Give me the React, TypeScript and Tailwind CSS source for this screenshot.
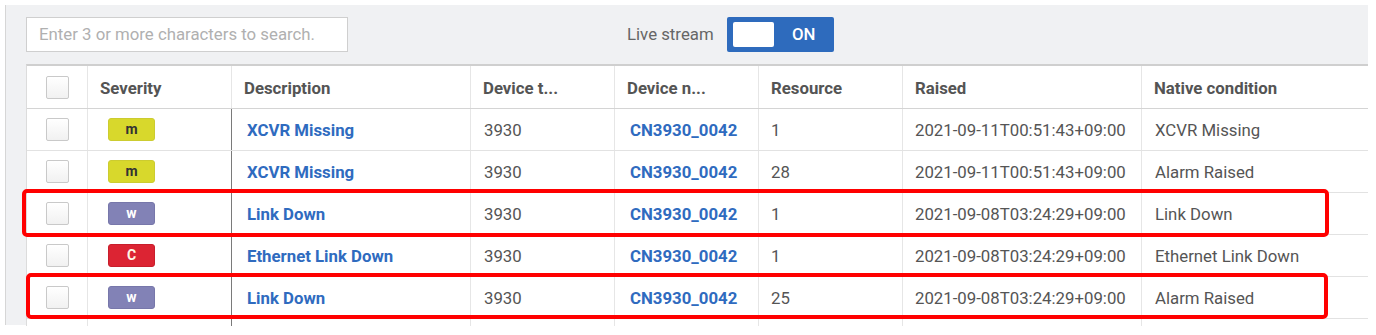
const cols = "grid grid-cols-[61px_144px_239px_144px_144px_144px_239px_1fr]"

type Sev = "m" | "w" | "C"

const rows: { sev: Sev; desc: string; res: string; raised: string; native: string }[] = [
  { sev: "m", desc: "XCVR Missing", res: "1", raised: "2021-09-11T00:51:43+09:00", native: "XCVR Missing" },
  { sev: "m", desc: "XCVR Missing", res: "28", raised: "2021-09-11T00:51:43+09:00", native: "Alarm Raised" },
  { sev: "w", desc: "Link Down", res: "1", raised: "2021-09-08T03:24:29+09:00", native: "Link Down" },
  { sev: "C", desc: "Ethernet Link Down", res: "1", raised: "2021-09-08T03:24:29+09:00", native: "Ethernet Link Down" },
  { sev: "w", desc: "Link Down", res: "25", raised: "2021-09-08T03:24:29+09:00", native: "Alarm Raised" },
]

const sevStyle: Record<Sev, string> = {
  m: "bg-[#d8d82c] text-[#333] border-[#cccc30]",
  w: "bg-[#8282b6] text-white border-[#7777aa]",
  C: "bg-[#dc2433] text-[#fff6e6] border-[#c81e2c]",
}

function Checkbox() {
  return (
    <div className="w-[23px] h-[23px] rounded-[2px] border border-[#c9c9c9] bg-gradient-to-b from-white to-[#f1f1f1]" />
  )
}

function Badge({ sev }: { sev: Sev }) {
  return (
    <div
      className={`w-[47px] h-[23px] rounded-[3px] border flex items-center justify-center text-[14px] font-bold ${sevStyle[sev]}`}
    >
      {sev}
    </div>
  )
}

const headers = ["Severity", "Description", "Device t...", "Device n...", "Resource", "Raised", "Native condition"]

export default function App() {
  return (
    <div className="relative w-[1376px] h-[335px] bg-white font-['Roboto',sans-serif] overflow-hidden">
      <div className="ml-[5px] mt-[5px] w-[1363px] h-[320px] border-l border-[#d6d6d6] bg-[#f0f1f3] pl-[20px] pt-[12px]">
        <div className="flex items-center h-[35px]">
          <div className="w-[322px] h-[35px] bg-white border border-[#cfcfcf] flex items-center px-[12px] pt-[1px] text-[16.8px] text-[#b0b0b0]">
            Enter 3 or more characters to search.
          </div>
          <span className="ml-[279px] pt-[1px] text-[16.8px] text-[#666]">Live stream</span>
          <div className="ml-[13px] w-[107px] h-[35px] rounded-[2px] bg-[#2e6bbd] flex items-center pl-[6px]">
            <div className="w-[41px] h-[25px] rounded-[2px] bg-white" />
            <span className="flex-1 text-center pt-[1px] text-white text-[16.8px] font-medium">ON</span>
          </div>
        </div>

        <div className="mt-[12px] bg-white border-t-2 border-l border-[#cfcfcf] border-l-[#dcdcdc]">
          <div className={`${cols} h-[43px] border-b border-[#d4d4d4]`}>
            <div className="flex items-center justify-center border-r border-[#e6e6e6]">
              <Checkbox />
            </div>
            {headers.map((h, i) => (
              <div
                key={h}
                className={`flex items-center px-[12px] pt-[3px] text-[16.8px] font-bold text-[#545454] ${i < headers.length - 1 ? "border-r border-[#e6e6e6]" : ""}`}
              >
                {h}
              </div>
            ))}
          </div>
          {rows.map((r, i) => (
            <div key={i} className={`${cols} h-[42px] border-b border-[#e2e2e2] text-[16.8px] text-[#555]`}>
              <div className="flex items-center justify-center border-r border-[#e6e6e6]">
                <Checkbox />
              </div>
              <div className="flex items-center pl-[20px] border-r border-[#7a7a7a]">
                <Badge sev={r.sev} />
              </div>
              <div className="flex items-center pl-[15px] pt-[2px] border-r border-[#e6e6e6] font-bold text-[#2f6bbf]">
                {r.desc}
              </div>
              <div className="flex items-center pl-[13px] pt-[2px] border-r border-[#e6e6e6]">3930</div>
              <div className="flex items-center pl-[15px] pt-[2px] border-r border-[#e6e6e6] font-bold text-[#2f6bbf]">
                CN3930_0042
              </div>
              <div className="flex items-center pl-[12px] pt-[2px] border-r border-[#e6e6e6]">{r.res}</div>
              <div className="flex items-center pl-[12px] pt-[2px] border-r border-[#e6e6e6]">{r.raised}</div>
              <div className="flex items-center pl-[13px] pt-[2px]">{r.native}</div>
            </div>
          ))}
          <div className={`${cols} h-[7px]`}>
            <div className="border-r border-[#e6e6e6]" />
            <div className="border-r border-[#7a7a7a]" />
            <div className="border-r border-[#e6e6e6]" />
            <div className="border-r border-[#e6e6e6]" />
            <div className="border-r border-[#e6e6e6]" />
            <div className="border-r border-[#e6e6e6]" />
            <div className="border-r border-[#e6e6e6]" />
            <div />
          </div>
        </div>
      </div>

      <div className="absolute left-[22px] top-[189px] w-[1307px] h-[48px] border-[4px] border-[#ff0000] rounded-[5px]" />
      <div className="absolute left-[26px] top-[273px] w-[1302px] h-[46px] border-[4px] border-[#ff0000] rounded-[5px]" />
    </div>
  )
}
